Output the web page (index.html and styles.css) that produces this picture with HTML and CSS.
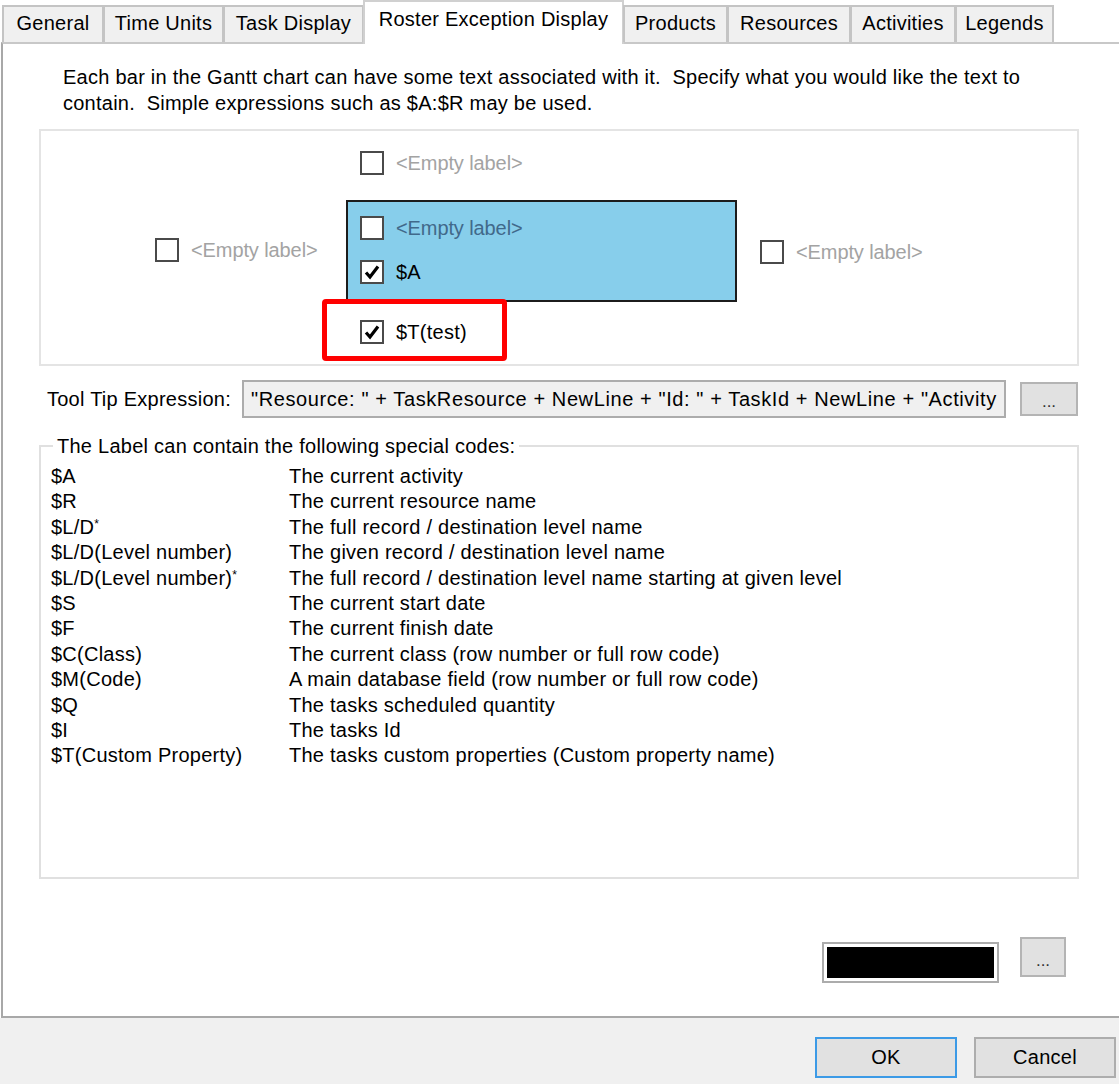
FILE: index.html
```html
<!DOCTYPE html>
<html lang="en">
<head>
  <meta charset="UTF-8" />
  <title>Roster Exception Display</title>
  <link rel="stylesheet" href="styles.css">
</head>
<body>
  <div class="tabs">
    <div class="tab w-general">General</div>
    <div class="tab w-time">Time Units</div>
    <div class="tab w-task">Task Display</div>
    <div class="tab active w-roster">Roster Exception Display</div>
    <div class="tab w-products">Products</div>
    <div class="tab w-resources">Resources</div>
    <div class="tab w-activities">Activities</div>
    <div class="tab w-legends">Legends</div>
  </div>

  <div class="panel">
    <p class="intro">Each bar in the Gantt chart can have some text associated with it.&nbsp; Specify what you would like the text to<br>contain.&nbsp; Simple expressions such as $A:$R may be used.</p>

    <div class="labels">
      <div class="side left">
        <div class="check"><span class="box"></span><span class="empty">&lt;Empty label&gt;</span></div>
      </div>

      <div class="centre">
        <div class="check top"><span class="box"></span><span class="empty">&lt;Empty label&gt;</span></div>
        <div class="bar">
          <div class="check"><span class="box"></span><span class="empty on-bar">&lt;Empty label&gt;</span></div>
          <div class="check"><span class="box"><svg viewBox="0 0 20 20"><path d="M4 10.5 L8 15 L16 4.5" /></svg></span><span>$A</span></div>
        </div>
        <div class="highlight">
          <div class="check"><span class="box"><svg viewBox="0 0 20 20"><path d="M4 10.5 L8 15 L16 4.5" /></svg></span><span>$T(test)</span></div>
        </div>
      </div>

      <div class="side right">
        <div class="check"><span class="box"></span><span class="empty">&lt;Empty label&gt;</span></div>
      </div>
    </div>

    <div class="tooltip-row">
      <label class="tooltip-label">Tool Tip Expression:</label>
      <div class="textbox">"Resource: " + TaskResource + NewLine + "Id: " + TaskId + NewLine + "Activity</div>
      <button class="dots">...</button>
    </div>

    <fieldset class="codes">
      <legend>The Label can contain the following special codes:</legend>
      <div class="code-list">
        <span>$A</span><span>The current activity</span>
        <span>$R</span><span>The current resource name</span>
        <span>$L/D<sup>*</sup></span><span>The full record / destination level name</span>
        <span>$L/D(Level number)</span><span>The given record / destination level name</span>
        <span>$L/D(Level number)<sup>*</sup></span><span>The full record / destination level name starting at given level</span>
        <span>$S</span><span>The current start date</span>
        <span>$F</span><span>The current finish date</span>
        <span>$C(Class)</span><span>The current class (row number or full row code)</span>
        <span>$M(Code)</span><span>A main database field (row number or full row code)</span>
        <span>$Q</span><span>The tasks scheduled quantity</span>
        <span>$I</span><span>The tasks Id</span>
        <span>$T(Custom Property)</span><span>The tasks custom properties (Custom property name)</span>
      </div>
    </fieldset>

    <div class="colour-row">
      <div class="swatch"></div>
      <button class="dots small">...</button>
    </div>
  </div>

  <div class="footer">
    <button class="btn default">OK</button>
    <button class="btn">Cancel</button>
  </div>
</body>
</html>
```

FILE: styles.css
```css
* {
  box-sizing: border-box;
  margin: 0;
  padding: 0;
}
body {
  font-family: 'Liberation Sans', Arial, sans-serif;
  font-size: 20px;
  letter-spacing: 0.25px;
  color: #000;
  background: #fff;
  width: 1119px;
  height: 1084px;
  overflow: hidden;
}

/* tab strip */
.tabs {
  display: flex;
  align-items: flex-end;
  height: 42px;
  padding-left: 2px;
  position: relative;
  z-index: 1;
}
.tab {
  height: 37px;
  display: flex;
  align-items: center;
  justify-content: center;
  background: #f0f0f0;
  border: 2px solid #c4c4c4;
  border-bottom: none;
  margin-right: -1px;
  padding-bottom: 2px;
  white-space: nowrap;
}
.tab.active {
  height: 44px;
  margin-bottom: -2px;
  background: #fff;
  border-color: #d0d0d0;
  padding-bottom: 8px;
}
.w-general { width: 102px; }
.w-time { width: 121px; }
.w-task { width: 141px; }
.w-roster { width: 261px; }
.w-products { width: 105px; }
.w-resources { width: 124px; }
.w-activities { width: 106px; }
.w-legends { width: 99px; }

/* main panel */
.panel {
  height: 976px;
  margin-left: 1px;
  border-top: 2px solid #c8c8c8;
  border-left: 2px solid #a8a8a8;
  border-bottom: 2px solid #a8a8a8;
  padding-left: 36px;
}
.intro {
  margin-top: 20px;
  padding-left: 24px;
  line-height: 26px;
}

/* label layout box */
.labels {
  margin-top: 13px;
  width: 1040px;
  height: 237px;
  border: 2px solid #e4e4e4;
  display: grid;
  grid-template-columns: 305px 391px 1fr;
}
.side {
  display: flex;
  align-items: center;
}
.side.left { padding-left: 114px; padding-top: 5px; }
.side.right { padding-left: 23px; padding-top: 9px; }
.centre {
  padding-top: 20px;
}
.check {
  display: flex;
  align-items: center;
  gap: 12px;
  height: 24px;
}
.check.top { padding-left: 14px; }
.box {
  width: 24px;
  height: 24px;
  border: 2px solid #4a4a4a;
  background: #fff;
  flex: none;
}
.box svg {
  display: block;
  width: 20px;
  height: 20px;
}
.box path {
  fill: none;
  stroke: #000;
  stroke-width: 3.2;
}
.empty { color: #a3a3a3; letter-spacing: -0.1px; }
.empty.on-bar { color: #41698a; }
.bar {
  margin-top: 25px;
  height: 102px;
  background: #87ceeb;
  border: 2px solid #1c1c1c;
  padding: 14px 0 0 12px;
  display: flex;
  flex-direction: column;
  gap: 20px;
}
.highlight {
  margin: -3px 0 0 -24px;
  width: 185px;
  height: 62px;
  border: 5px solid #ff0000;
  border-radius: 4px;
  padding: 16px 0 0 33px;
  position: relative;
}

/* tool tip */
.tooltip-row {
  display: flex;
  align-items: center;
  margin-top: 14px;
  margin-left: 8px;
  height: 38px;
}
.tooltip-label { flex: 0 0 195px; white-space: nowrap; }
.textbox {
  width: 764px;
  height: 38px;
  line-height: 34px;
  background: #f0f0f0;
  border: 2px solid #acacac;
  padding-left: 7px;
  letter-spacing: 0.6px;
  white-space: nowrap;
  overflow: hidden;
}
.dots {
  font-family: inherit;
  font-size: 17px;
  width: 58px;
  height: 34px;
  margin-left: 14px;
  background: #e1e1e1;
  border: 2px solid #b4b4b4;
  color: #333;
  padding-top: 6px;
}

/* special codes group */
.codes {
  margin-top: 17px;
  width: 1040px;
  height: 444px;
  border: 2px solid #e0e0e0;
  padding: 7px 0 0 10px;
}
.codes legend {
  line-height: 22px;
  padding: 0 4px;
  margin-left: 2px;
}
.code-list {
  display: grid;
  grid-template-columns: 238px 1fr;
  line-height: 25.4px;
}
.code-list sup {
  font-size: 12px;
  vertical-align: 6px;
  line-height: 0;
}

/* colour picker */
.colour-row {
  width: 1040px;
  display: flex;
  justify-content: flex-end;
  align-items: center;
  gap: 21px;
  padding-right: 13px;
  margin-top: 60px;
}
.swatch {
  width: 177px;
  height: 41px;
  border: 2px solid #acacac;
  box-shadow: inset 0 0 0 3px #fff;
  background: #000;
  margin-top: 3px;
}
.dots.small {
  width: 46px;
  height: 40px;
  margin-left: 0;
  margin-top: -8px;
  padding-top: 8px;
}

/* buttons */
.footer {
  height: 66px;
  background: #f0f0f0;
  display: flex;
  justify-content: flex-end;
  gap: 17px;
  padding: 19px 3px 0 0;
}
.btn {
  font-family: inherit;
  font-size: 20px;
  letter-spacing: 0.3px;
  width: 142px;
  height: 41px;
  background: #e1e1e1;
  border: 2px solid #adadad;
}
.btn.default { border-color: #3c9ae6; }
```
